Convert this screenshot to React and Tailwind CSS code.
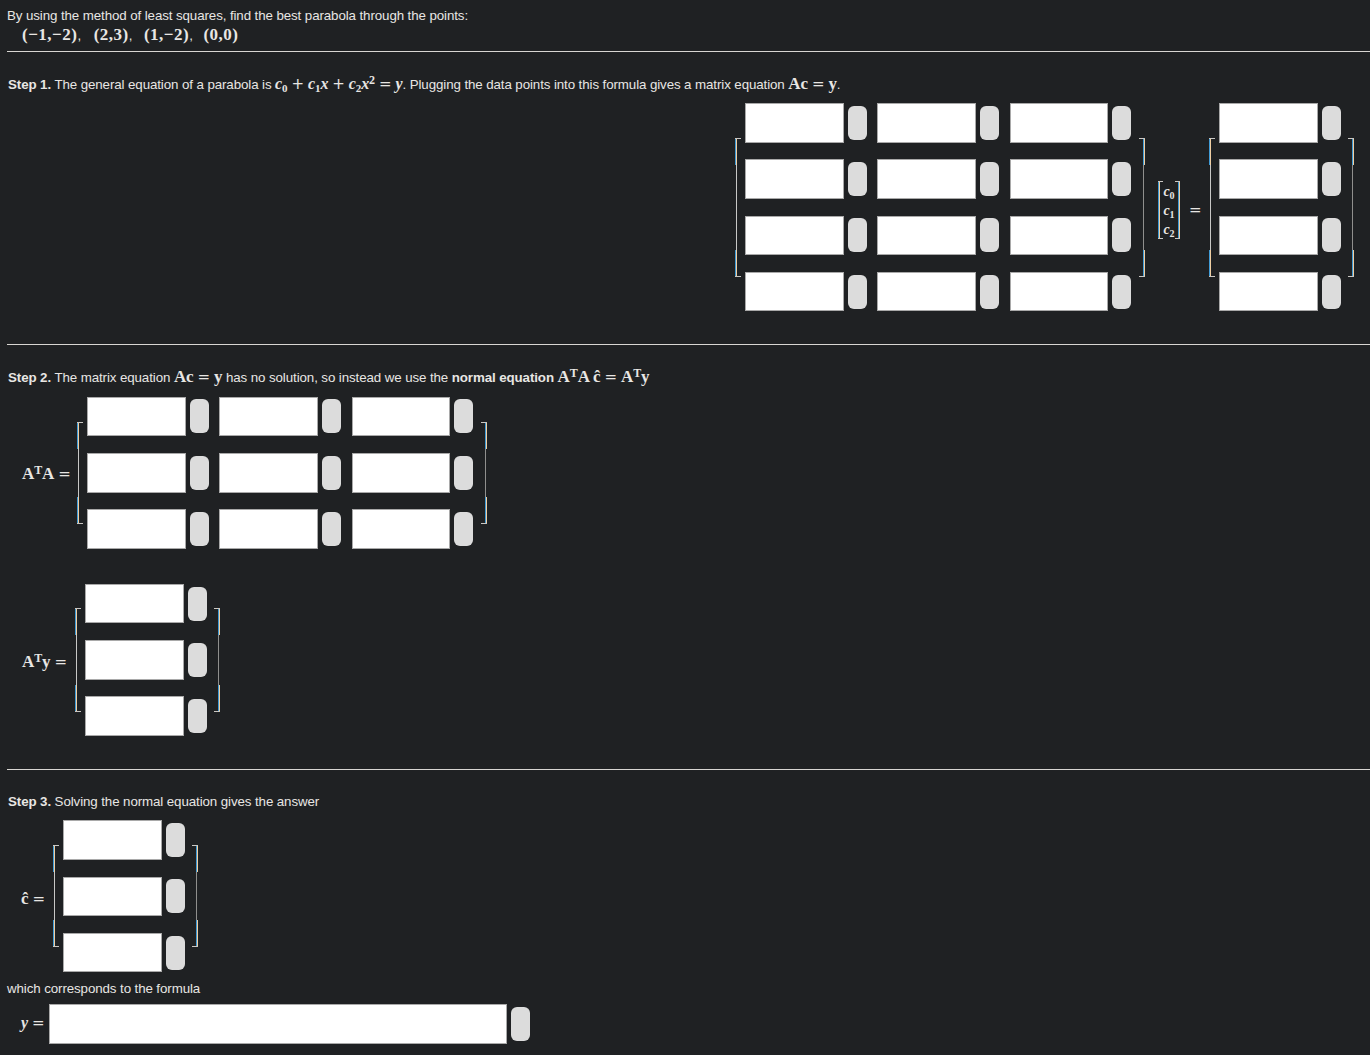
const math = "font-['Liberation_Serif',serif] text-[17px] leading-none";

function B({ children }) {
  return <span className={`${math} font-bold`}>{children}</span>;
}

function I({ children, small }) {
  return <span className={`font-['Liberation_Serif',serif] leading-none italic font-bold ${small ? 'text-[14px]' : 'text-[16px]'}`}>{children}</span>;
}

function Op({ children }) {
  return <span className="font-['DejaVu_Sans',sans-serif] text-[15px] leading-none mx-[4px]">{children}</span>;
}

function Sub({ children, small }) {
  return <span className={`font-['Liberation_Serif',serif] font-bold leading-none align-[-3px] ${small ? 'text-[10px]' : 'text-[11px]'}`}>{children}</span>;
}

function Sup({ children }) {
  return <span className="font-['Liberation_Serif',serif] font-bold text-[12px] leading-none align-[5px]">{children}</span>;
}

function Bracket({ side, height }) {
  const left = side === 'left';
  const x = left ? 0 : 4;
  const seg = 27;
  return (
    <svg width="6" height={height} shapeRendering="crispEdges" className="shrink-0 block">
      <rect x={left ? 1 : 4} y="0" width="1" height={height} fill={left ? '#c8c8c6' : '#8f8f8d'} />
      <rect x={x} y="0" width="1" height={seg} fill="#3f9bd6" />
      <rect x={x + 1} y="0" width="1" height={seg} fill="#f0cfa2" />
      <rect x={x} y={height - seg} width="1" height={seg} fill="#3f9bd6" />
      <rect x={x + 1} y={height - seg} width="1" height={seg} fill="#f0cfa2" />
      <rect x="0" y="0" width="6" height="1" fill="#c9c7c3" />
      <rect x="0" y={height - 1} width="6" height="1" fill="#c9c7c3" />
    </svg>
  );
}

function Cell() {
  return (
    <div className="flex items-center">
      <div className="w-[98.67px] h-[39.5px] bg-white border border-[#a9a9a9]" />
      <div className="ml-[4px] w-[19px] h-[34px] bg-[#dcdcdc] rounded-[6px]" />
    </div>
  );
}

function Grid({ rows, cols }) {
  const cells = [];
  for (let i = 0; i < rows * cols; i++) cells.push(<Cell key={i} />);
  if (cols === 3) {
    return <div className="grid grid-cols-[132.33px_132.33px_122.34px] gap-y-[16.83px]">{cells}</div>;
  }
  return <div className="grid grid-cols-[122px] gap-y-[16.83px]">{cells}</div>;
}

function Matrix({ rows, cols, height }) {
  return (
    <div className="flex items-center">
      <Bracket side="left" height={height} />
      <div className="ml-[4px] mr-[7px]">
        <Grid rows={rows} cols={cols} />
      </div>
      <Bracket side="right" height={height} />
    </div>
  );
}

function Line() {
  return <hr className="border-0 h-px bg-[#d8d6d2]" />;
}

function Vector() {
  return (
    <div className="relative w-[24px] h-[58px]">
      <svg width="24" height="58" shapeRendering="crispEdges" className="block">
        <rect x="1" y="0" width="1" height="58" fill="#3f9bd6" />
        <rect x="2" y="0" width="1" height="58" fill="#f0cfa2" />
        <rect x="1" y="0" width="5" height="1" fill="#c9c7c3" />
        <rect x="1" y="57" width="5" height="1" fill="#c9c7c3" />
        <rect x="21" y="0" width="1" height="58" fill="#3f9bd6" />
        <rect x="22" y="0" width="1" height="58" fill="#f0cfa2" />
        <rect x="18" y="0" width="5" height="1" fill="#c9c7c3" />
        <rect x="18" y="57" width="5" height="1" fill="#c9c7c3" />
      </svg>
      <div className="absolute inset-0 flex flex-col items-center justify-between py-[1px] leading-[19px]">
        <span><I small>c</I><Sub small>0</Sub></span>
        <span><I small>c</I><Sub small>1</Sub></span>
        <span><I small>c</I><Sub small>2</Sub></span>
      </div>
    </div>
  );
}

export default function App() {
  return (
    <div className="min-h-[1055px] bg-[#1f2123] text-[#e8e6e3] font-['Liberation_Sans',sans-serif] text-[13.33px] tracking-[-0.1px] leading-[20px] pl-[7px] overflow-hidden">
      <p className="pt-[6px]">By using the method of least squares, find the best parabola through the points:</p>
      <div className="pl-[15px] h-[25px] leading-[18px] tracking-[0.5px]">
        <B>(−1,−2)</B>,<span className="ml-[12px]" /><B>(2,3)</B>,<span className="ml-[11px]" /><B>(1,−2)</B>,<span className="ml-[10px]" /><B>(0,0)</B>
      </div>
      <Line />

      <p className="mt-[22px] h-[20px] pl-[1px]">
        <b>Step 1.</b> The general equation of a parabola is <I>c</I><Sub>0</Sub><Op>+</Op><I>c</I><Sub>1</Sub><I>x</I><Op>+</Op><I>c</I><Sub>2</Sub><I>x</I><Sup>2</Sup><Op>=</Op><I>y</I>. Plugging the data points into this formula gives a matrix equation <B>Ac</B><Op>=</Op><B>y</B>.
      </p>

      <div className="mt-[9px] ml-[728px] flex items-center">
        <Matrix rows={4} cols={3} height={139} />
        <div className="ml-[12px] mt-[5px]">
          <Vector />
        </div>
        <span className="ml-[8px] mt-[5px] w-[12px] text-center font-['DejaVu_Sans',sans-serif] text-[15px]">=</span>
        <div className="ml-[8px]">
          <Matrix rows={4} cols={1} height={139} />
        </div>
      </div>

      <div className="mt-[32.5px]"><Line /></div>

      <p className="mt-[22px] h-[20px] pl-[1px]">
        <b>Step 2.</b> The matrix equation <B>Ac</B><Op>=</Op><B>y</B> has no solution, so instead we use the <b>normal equation</b> <B>A</B><Sup>T</Sup><B>A ĉ</B><Op>=</Op><B>A</B><Sup>T</Sup><B>y</B>
      </p>

      <div className="mt-[9.7px] pl-[15px] flex items-center">
        <div className="w-[55px] mt-[4px] whitespace-nowrap"><B>A</B><Sup>T</Sup><B>A</B><Op>=</Op></div>
        <Matrix rows={3} cols={3} height={102} />
      </div>

      <div className="mt-[35px] pl-[15px] flex items-center">
        <div className="w-[53px] mt-[5px] whitespace-nowrap"><B>A</B><Sup>T</Sup><B>y</B><Op>=</Op></div>
        <Matrix rows={3} cols={1} height={104} />
      </div>

      <div className="mt-[33px]"><Line /></div>

      <p className="mt-[22px] h-[20px] pl-[1px]"><b>Step 3.</b> Solving the normal equation gives the answer</p>

      <div className="mt-[8.3px] pl-[14px] flex items-center">
        <div className="w-[32px] mt-[7px] whitespace-nowrap"><B>ĉ</B><Op>=</Op></div>
        <Matrix rows={3} cols={1} height={102} />
      </div>

      <p className="mt-[6.5px] h-[20px]">which corresponds to the formula</p>

      <div className="mt-[5px] pl-[14px] flex items-center">
        <div className="w-[28px] whitespace-nowrap"><I>y</I><Op>=</Op></div>
        <div className="w-[458px] h-[40px] bg-white border border-[#a9a9a9]" />
        <div className="ml-[4px] w-[19px] h-[34px] bg-[#dcdcdc] rounded-[6px]" />
      </div>
    </div>
  );
}
